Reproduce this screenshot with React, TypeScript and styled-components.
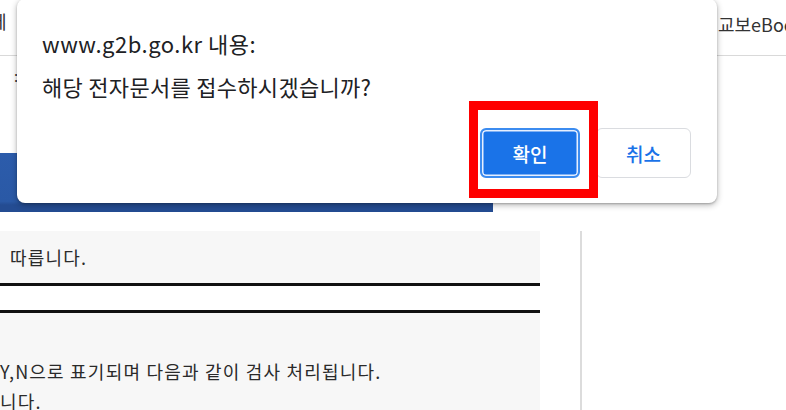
import React from "react";
import styled, { createGlobalStyle } from "styled-components";

const Global = createGlobalStyle`
  html, body { margin: 0; padding: 0; background: #fff; }
  body { width: 786px; height: 410px; overflow: hidden; font-family: "Noto Sans CJK KR", "Noto Sans", sans-serif; }
  #root { position: relative; width: 786px; height: 410px; overflow: hidden; }
`;

const Page = styled.div`
  display: flex;
  flex-direction: column;
  width: 786px;
  height: 410px;
`;

const TopBar = styled.div`
  display: grid;
  grid-template-columns: 718px 1fr;
  height: 55px;
  border-bottom: 1px solid #d9d9d9;
  font-size: 18px;
  color: #333;
`;

const TopLeftText = styled.span`
  margin-left: -10px;
  padding-top: 9px;
  line-height: 24px;
`;

const TopRightText = styled.span`
  padding-top: 12px;
  line-height: 24px;
  white-space: nowrap;
  overflow: hidden;
`;

const SubBar = styled.div`
  height: 97px;
  padding-left: 14px;
  box-sizing: border-box;
  font-size: 15px;
  line-height: 20px;
  padding-top: 10px;
  color: #333;
`;

const Banner = styled.div`
  width: 493px;
  height: 59px;
  background: linear-gradient(180deg, #2c5cab 0%, #2a59a6 82%, #244c92 88%, #244c92 100%);
`;

const Content = styled.div`
  display: grid;
  grid-template-columns: 540px 40px 1fr;
  margin-top: 19px;
  flex: 1;
  min-height: 0;
`;

const LeftCol = styled.div`
  display: flex;
  flex-direction: column;
`;

const GrayBox = styled.div<{ $h?: number; $pt: number; $pl: number }>`
  background: #f7f7f7;
  ${(p) => (p.$h ? `height: ${p.$h}px;` : "flex: 1;")}
  padding-top: ${(p) => p.$pt}px;
  padding-left: ${(p) => p.$pl}px;
  box-sizing: border-box;
  font-size: 18px;
  letter-spacing: 1.2px;
  line-height: 30px;
  color: #2a2a2a;
  white-space: nowrap;
  overflow: hidden;
`;

const Rule = styled.div`
  height: 3px;
  background: #111;
`;

const WhiteGap = styled.div`
  height: 24px;
`;

const RightCol = styled.div`
  border-left: 2px solid #dcdcdc;
`;

const Dialog = styled.div`
  position: absolute;
  left: 17px;
  top: -1px;
  width: 700px;
  height: 204px;
  box-sizing: border-box;
  background: #fff;
  border-radius: 8px;
  box-shadow: 0 2px 6px rgba(0, 0, 0, 0.3), 0 1px 2px rgba(0, 0, 0, 0.2);
  padding: 29px 26px 25px 25px;
  display: flex;
  flex-direction: column;
  color: #202124;
`;

const Title = styled.div`
  font-size: 22px;
  letter-spacing: 0.5px;
  line-height: 30px;
`;

const Message = styled.div`
  font-size: 22px;
  letter-spacing: 0.3px;
  line-height: 30px;
  margin-top: 13px;
`;

const Buttons = styled.div`
  margin-top: auto;
  display: flex;
  justify-content: flex-end;
  gap: 16px;
`;

const Button = styled.button<{ $primary?: boolean }>`
  height: 50px;
  width: ${(p) => (p.$primary ? 100 : 95)}px;
  border-radius: 6px;
  font-family: "Noto Sans CJK KR", sans-serif;
  font-size: 19px;
  font-weight: 500;
  cursor: pointer;
  ${(p) =>
    p.$primary
      ? `
    background: #1a73e8;
    color: #fff;
    border: 2px solid #3c8cf0;
    box-shadow: inset 0 0 0 1.5px #e6efff;
  `
      : `
    background: #fff;
    color: #1a73e8;
    border: 1px solid #dadce0;
  `}
`;

const Highlight = styled.div`
  position: absolute;
  left: 469px;
  top: 101px;
  width: 129px;
  height: 97px;
  box-sizing: border-box;
  border: 9px solid #fe0000;
  pointer-events: none;
`;

export default function App() {
  return (
    <>
      <Global />
      <Page>
        <TopBar>
          <TopLeftText>에</TopLeftText>
          <TopRightText>교보eBook</TopRightText>
        </TopBar>
        <SubBar>:</SubBar>
        <Banner />
        <Content>
          <LeftCol>
            <GrayBox $h={52} $pt={11} $pl={10}>따릅니다.</GrayBox>
            <Rule />
            <WhiteGap />
            <Rule />
            <GrayBox $pt={43} $pl={0}>
              Y,N으로 표기되며 다음과 같이 검사 처리됩니다.
              <br />
              니다.
            </GrayBox>
          </LeftCol>
          <div />
          <RightCol />
        </Content>
      </Page>
      <Dialog>
        <Title>www.g2b.go.kr 내용:</Title>
        <Message>해당 전자문서를 접수하시겠습니까?</Message>
        <Buttons>
          <Button $primary>확인</Button>
          <Button>취소</Button>
        </Buttons>
      </Dialog>
      <Highlight />
    </>
  );
}
